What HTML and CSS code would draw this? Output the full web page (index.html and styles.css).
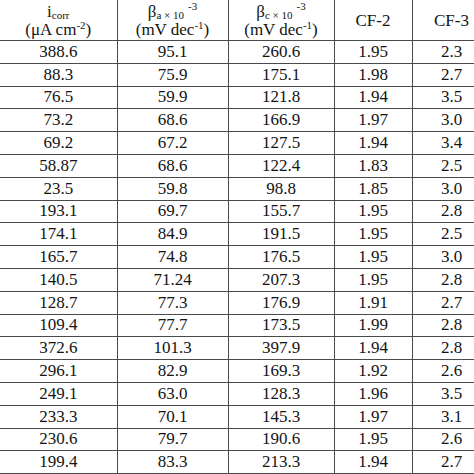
FILE: index.html
```html
<!DOCTYPE html>
<html>
<head>
<meta charset="utf-8">
<link rel="stylesheet" href="styles.css">
</head>
<body>
<table class="data">
  <colgroup>
    <col class="c1"><col class="c2"><col class="c3"><col class="c4"><col class="c5">
  </colgroup>
  <thead>
    <tr class="head">
      <th><span class="ln">i<sub>corr</sub></span><span class="ln">(μA cm<sup>-2</sup>)</span></th>
      <th><span class="ln">β<sub>a × 10</sub><sup class="exp">-3</sup></span><span class="ln">(mV dec<sup>-1</sup>)</span></th>
      <th><span class="ln">β<sub>c × 10</sub><sup class="exp">-3</sup></span><span class="ln">(mV dec<sup>-1</sup>)</span></th>
      <th>CF-2</th>
      <th>CF-3</th>
    </tr>
  </thead>
  <tbody>
    <tr><td>388.6</td><td>95.1</td><td>260.6</td><td>1.95</td><td>2.3</td></tr>
    <tr><td>88.3</td><td>75.9</td><td>175.1</td><td>1.98</td><td>2.7</td></tr>
    <tr><td>76.5</td><td>59.9</td><td>121.8</td><td>1.94</td><td>3.5</td></tr>
    <tr><td>73.2</td><td>68.6</td><td>166.9</td><td>1.97</td><td>3.0</td></tr>
    <tr><td>69.2</td><td>67.2</td><td>127.5</td><td>1.94</td><td>3.4</td></tr>
    <tr><td>58.87</td><td>68.6</td><td>122.4</td><td>1.83</td><td>2.5</td></tr>
    <tr><td>23.5</td><td>59.8</td><td>98.8</td><td>1.85</td><td>3.0</td></tr>
    <tr><td>193.1</td><td>69.7</td><td>155.7</td><td>1.95</td><td>2.8</td></tr>
    <tr><td>174.1</td><td>84.9</td><td>191.5</td><td>1.95</td><td>2.5</td></tr>
    <tr><td>165.7</td><td>74.8</td><td>176.5</td><td>1.95</td><td>3.0</td></tr>
    <tr><td>140.5</td><td>71.24</td><td>207.3</td><td>1.95</td><td>2.8</td></tr>
    <tr><td>128.7</td><td>77.3</td><td>176.9</td><td>1.91</td><td>2.7</td></tr>
    <tr><td>109.4</td><td>77.7</td><td>173.5</td><td>1.99</td><td>2.8</td></tr>
    <tr><td>372.6</td><td>101.3</td><td>397.9</td><td>1.94</td><td>2.8</td></tr>
    <tr><td>296.1</td><td>82.9</td><td>169.3</td><td>1.92</td><td>2.6</td></tr>
    <tr><td>249.1</td><td>63.0</td><td>128.3</td><td>1.96</td><td>3.5</td></tr>
    <tr><td>233.3</td><td>70.1</td><td>145.3</td><td>1.97</td><td>3.1</td></tr>
    <tr><td>230.6</td><td>79.7</td><td>190.6</td><td>1.95</td><td>2.6</td></tr>
    <tr><td>199.4</td><td>83.3</td><td>213.3</td><td>1.94</td><td>2.7</td></tr>
  </tbody>
</table>
</body>
</html>
```
FILE: styles.css
```css
html, body {
  margin: 0;
  padding: 0;
  background: #fff;
  overflow: hidden;
  width: 474px;
  height: 474px;
}
.data {
  border-collapse: collapse;
  table-layout: fixed;
  width: 491px;
  font-family: "Liberation Serif", "Times New Roman", serif;
  font-size: 17px;
  color: #141414;
}
.c1 { width: 117px; }
.c2 { width: 111px; }
.c3 { width: 106px; }
.c4 { width: 78px; }
.c5 { width: 79px; }
.data th, .data td {
  border: 1px solid #4a4a4a;
  padding: 0;
  text-align: center;
  font-weight: normal;
  line-height: 18px;
}
.data tr > :first-child { border-left: none; }
.data thead th {
  border-top: none;
  height: 38px;
  padding-top: 2px;
  vertical-align: middle;
}
.data td { height: 21.8px; }
.ln { display: block; }
sub {
  font-size: 11px;
  vertical-align: -2px;
  line-height: 0;
}
sup {
  font-size: 11px;
  vertical-align: 6px;
  line-height: 0;
}
sup.exp { vertical-align: 7px; margin-left: 4px; }
```
